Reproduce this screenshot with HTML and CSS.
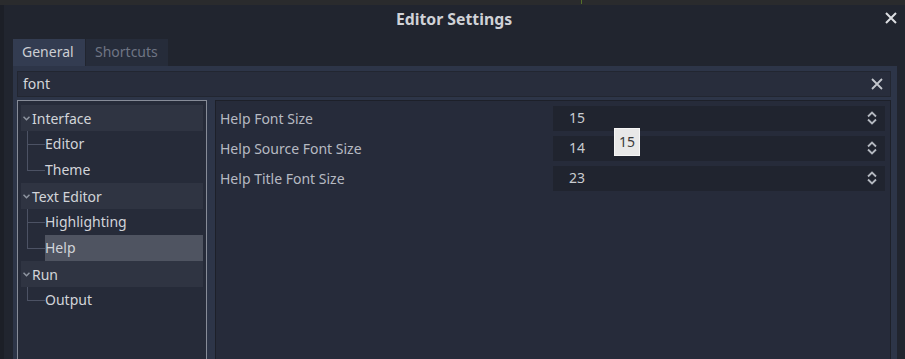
FILE: index.html
```html
<!DOCTYPE html>
<html lang="en">
<head>
    <meta charset="UTF-8">
    <title>Editor Settings</title>
    <link rel="stylesheet" href="styles.css">
</head>
<body>
    <div class="backdrop"><span class="mark"></span></div>

    <div class="dialog">
        <div class="titlebar">
            <span class="title">Editor Settings</span>
            <button class="close-btn">
                <svg width="12" height="12" viewBox="0 0 12 12"><path d="M1 1L11 11M11 1L1 11" stroke="#dcdee2" stroke-width="2"/></svg>
            </button>
        </div>

        <div class="tabs">
            <div class="tab active">General</div>
            <div class="tab">Shortcuts</div>
        </div>

        <div class="tab-panel">
            <div class="search">
                <span class="search-text">font</span>
                <svg class="clear" width="12" height="12" viewBox="0 0 12 12"><path d="M1 1L11 11M11 1L1 11" stroke="#c4c7cd" stroke-width="1.8"/></svg>
            </div>

            <div class="split">
                <!-- section tree -->
                <div class="tree">
                    <div class="tree-row group"><svg class="arrow" width="7" height="5" viewBox="0 0 7 5"><path d="M0.5 0.8L3.5 3.8L6.5 0.8" stroke="#8f95a1" stroke-width="1.5" fill="none"/></svg>Interface</div>
                    <div class="tree-row child"><span>Editor</span></div>
                    <div class="tree-row child last"><span>Theme</span></div>
                    <div class="tree-row group"><svg class="arrow" width="7" height="5" viewBox="0 0 7 5"><path d="M0.5 0.8L3.5 3.8L6.5 0.8" stroke="#8f95a1" stroke-width="1.5" fill="none"/></svg>Text Editor</div>
                    <div class="tree-row child"><span>Highlighting</span></div>
                    <div class="tree-row child last"><span class="selected">Help</span></div>
                    <div class="tree-row group"><svg class="arrow" width="7" height="5" viewBox="0 0 7 5"><path d="M0.5 0.8L3.5 3.8L6.5 0.8" stroke="#8f95a1" stroke-width="1.5" fill="none"/></svg>Run</div>
                    <div class="tree-row child last"><span>Output</span></div>
                </div>

                <!-- property list -->
                <div class="inspector">
                    <div class="prop">
                        <span class="prop-name">Help Font Size</span>
                        <div class="spin">
                            <span class="spin-value">15</span>
                            <svg width="10" height="14" viewBox="0 0 10 14"><path d="M1 5.5L5 1.5L9 5.5M1 8.5L5 12.5L9 8.5" stroke="#b4b8c0" stroke-width="1.8" fill="none"/></svg>
                        </div>
                    </div>
                    <div class="prop">
                        <span class="prop-name">Help Source Font Size</span>
                        <div class="spin">
                            <span class="spin-value">14</span>
                            <svg width="10" height="14" viewBox="0 0 10 14"><path d="M1 5.5L5 1.5L9 5.5M1 8.5L5 12.5L9 8.5" stroke="#b4b8c0" stroke-width="1.8" fill="none"/></svg>
                        </div>
                    </div>
                    <div class="prop">
                        <span class="prop-name">Help Title Font Size</span>
                        <div class="spin">
                            <span class="spin-value">23</span>
                            <svg width="10" height="14" viewBox="0 0 10 14"><path d="M1 5.5L5 1.5L9 5.5M1 8.5L5 12.5L9 8.5" stroke="#b4b8c0" stroke-width="1.8" fill="none"/></svg>
                        </div>
                    </div>
                </div>
            </div>
        </div>
    </div>

    <div class="tooltip">15</div>
</body>
</html>
```

FILE: styles.css
```css
body {
    margin: 0;
    width: 905px;
    height: 359px;
    overflow: hidden;
    background: #1c1f27;
    font-family: 'Noto Sans', sans-serif;
    font-size: 14px;
    position: relative;
}
.backdrop {
    height: 5px;
    background: #2a2b2d;
    position: relative;
}
.mark {
    position: absolute;
    left: 581px;
    top: 0;
    width: 1px;
    height: 4px;
    background: #56702a;
}
.dialog {
    margin-left: 4px;
    height: 354px;
    background: #21252f;
    padding: 0 8px 0 9px;
    box-sizing: border-box;
    display: flex;
    flex-direction: column;
}
.titlebar {
    height: 34px;
    display: flex;
    align-items: center;
    justify-content: center;
    position: relative;
}
.title {
    color: #d0d2d7;
    font-weight: bold;
    font-size: 15.8px;
    margin-left: -2px;
    margin-top: -7px;
}
.close-btn {
    position: absolute;
    right: -1px;
    top: 7px;
    border: none;
    background: none;
    padding: 0;
    width: 14px;
    height: 14px;
}
.tabs {
    display: flex;
    height: 27px;
}
.tab {
    padding: 0 10px 0 9px;
    line-height: 26px;
    background: #262c3a;
    color: #6f7584;
    width: 63px;
}
.tab.active {
    background: #333c51;
    color: #ccced3;
    width: 53px;
    margin-right: 1px;
}
.tab-panel {
    flex: 1;
    background: #2d3548;
    padding: 5px 6px 0 4px;
    display: flex;
    flex-direction: column;
}
.search {
    height: 26px;
    background: #282d3c;
    border: 1px solid #222631;
    box-sizing: border-box;
    display: flex;
    align-items: center;
    justify-content: space-between;
    padding: 0 7px 0 5px;
}
.search-text {
    color: #d4d6da;
    font-size: 14px;
    margin-top: -1px;
}
.split {
    flex: 1;
    display: flex;
    gap: 8px;
    margin-top: 3px;
}
.tree {
    width: 190px;
    box-sizing: border-box;
    border: 1px solid #878c98;
    border-bottom: none;
    background: #262b39;
    padding: 4px 3px 0 3px;
}
.tree-row {
    height: 26px;
    display: flex;
    align-items: center;
    color: #d2d4d9;
    position: relative;
    line-height: 25px;
}
.tree-row.group {
    background: #2f3442;
}
.arrow {
    margin: 0 2px 0 2px;
}
.tree-row.child {
    padding-left: 24px;
}
.tree-row.child span {
    flex: 1;
    height: 26px;
    line-height: 26px;
}
.tree-row.child span.selected {
    background: #4f5461;
}
.tree-row.child::before {
    content: "";
    position: absolute;
    left: 6px;
    top: 0;
    width: 17px;
    height: 13px;
    border-left: 1px solid #4c5264;
    border-bottom: 1px solid #4c5264;
}
.tree-row.child::after {
    content: "";
    position: absolute;
    left: 6px;
    top: 14px;
    height: 12px;
    border-left: 1px solid #4c5264;
}
.tree-row.child.last::after {
    display: none;
}
.inspector {
    flex: 1;
    background: #262b3a;
    border: 1px solid #1d2029;
    border-bottom: none;
    padding: 4px 5px 0 4px;
    display: flex;
    flex-direction: column;
    gap: 4px;
}
.prop {
    display: flex;
    align-items: center;
    height: 26px;
    line-height: 24px;
}
.prop-name {
    width: 333px;
    color: #b6bac2;
    margin-top: 1px;
}
.spin {
    flex: 1;
    height: 25px;
    background: #20242f;
    display: flex;
    align-items: center;
    justify-content: space-between;
    padding: 0 8px 0 16px;
    color: #c9ccd1;
}
.tooltip {
    position: absolute;
    left: 614px;
    top: 128px;
    width: 26px;
    height: 28px;
    box-sizing: border-box;
    background: #e8e8e8;
    border: 1px solid #f6f6f6;
    color: #3a3a3a;
    text-align: center;
    line-height: 25px;
}
```
